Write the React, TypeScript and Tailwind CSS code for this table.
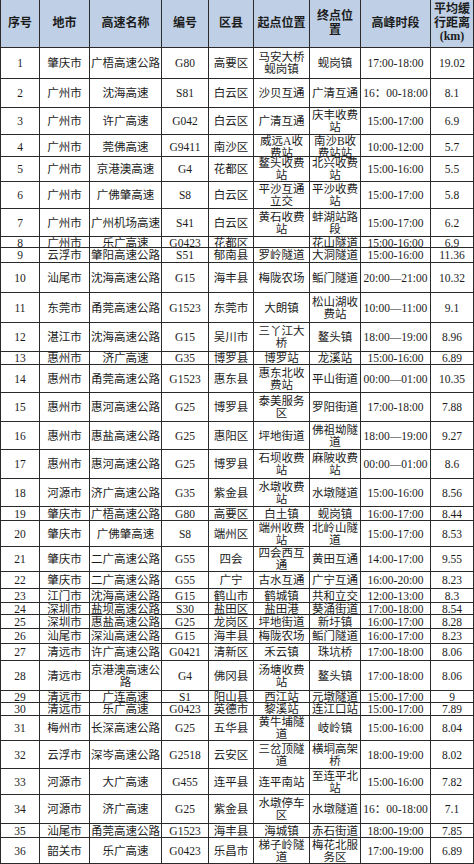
const GRID = 'grid grid-cols-[40px_50px_72px_47px_45px_56px_51px_70px_43px]'

type Row = [string, string, string, string, string, string, string, string, string, string]

// no, city, road, code, county, start, end, peak, km, row height
const rows: Row[] = [
  ['1', '肇庆市', '广梧高速公路', 'G80', '高要区', '马安大桥\n蚬岗镇', '蚬岗镇', '17:00-18:00', '19.02', 'h-[31px]'],
  ['2', '广州市', '沈海高速', 'S81', '白云区', '沙贝互通', '广清互通', '16：00-18:00', '8.1', 'h-[29px]'],
  ['3', '广州市', '许广高速', 'G042', '白云区', '广清互通', '庆丰收费\n站', '15:00-17:00', '6.9', 'h-[27px]'],
  ['4', '广州市', '莞佛高速', 'G9411', '南沙区', '威远A收\n费站', '南沙B收\n费站站', '10:00-12:00', '5.7', 'h-[22px]'],
  ['5', '广州市', '京港澳高速', 'G4', '花都区', '鳌头收费\n站', '北兴收费\n站', '15:00-16:00', '5.5', 'h-[25px]'],
  ['6', '广州市', '广佛肇高速', 'S8', '白云区', '平沙互通\n立交', '平沙收费\n站', '15:00-17:00', '5.8', 'h-[27px]'],
  ['7', '广州市', '广州机场高速', 'S41', '白云区', '黄石收费\n站', '蚌湖站路\n段', '15:00-17:00', '6.2', 'h-[28px]'],
  ['8', '广州市', '乐广高速', 'G0423', '花都区', '', '花山隧道', '15:00-16:00', '6.9', 'h-[11px]'],
  ['9', '云浮市', '肇阳高速公路', 'S51', '郁南县', '罗岭隧道', '大洞隧道', '15:00-16:00', '11.36', 'h-[15px]'],
  ['10', '汕尾市', '沈海高速公路', 'G15', '海丰县', '梅陇农场', '鲘门隧道', '20:00—21:00', '10.32', 'h-[30px]'],
  ['11', '东莞市', '甬莞高速公路', 'G1523', '东莞市', '大朗镇', '松山湖收\n费站', '10:00—11:00', '9.1', 'h-[30px]'],
  ['12', '湛江市', '沈海高速公路', 'G15', '吴川市', '三丫江大\n桥', '鳌头镇', '18:00—19:00', '8.96', 'h-[29px]'],
  ['13', '惠州市', '济广高速', 'G35', '博罗县', '博罗站', '龙溪站', '15:00-16:00', '6.89', 'h-[13px]'],
  ['14', '惠州市', '甬莞高速公路', 'G1523', '惠东县', '惠东北收\n费站', '平山街道', '00:00—01:00', '10.35', 'h-[28px]'],
  ['15', '惠州市', '惠河高速公路', 'G25', '博罗县', '泰美服务\n区', '罗阳街道', '17:00-18:00', '7.88', 'h-[29px]'],
  ['16', '惠州市', '惠盐高速公路', 'G25', '惠阳区', '坪地街道', '佛祖坳隧\n道', '18:00—19:00', '9.27', 'h-[28px]'],
  ['17', '惠州市', '惠河高速公路', 'G25', '博罗县', '石坝收费\n站', '麻陂收费\n站', '00:00—01:00', '8.6', 'h-[29px]'],
  ['18', '河源市', '济广高速公路', 'G35', '紫金县', '水墩收费\n站', '水墩隧道', '15:00-16:00', '8.56', 'h-[28px]'],
  ['19', '肇庆市', '广梧高速公路', 'G80', '高要区', '白土镇', '蚬岗镇', '16:00-17:00', '8.44', 'h-[14px]'],
  ['20', '肇庆市', '广佛肇高速', 'S8', '端州区', '端州收费\n站', '北岭山隧\n道', '15:00-17:00', '8.53', 'h-[26px]'],
  ['21', '肇庆市', '二广高速公路', 'G55', '四会', '四会西互\n通', '黄田互通', '14:00-17:00', '9.55', 'h-[25px]'],
  ['22', '肇庆市', '二广高速公路', 'G55', '广宁', '古水互通', '广宁互通', '16:00-20:00', '8.23', 'h-[17px]'],
  ['23', '江门市', '沈海高速公路', 'G15', '鹤山市', '鹤城镇', '共和立交', '12:00-13:00', '8.3', 'h-[14px]'],
  ['24', '深圳市', '盐坝高速公路', 'S30', '盐田区', '盐田港', '葵涌街道', '17:00-18:00', '8.54', 'h-[12px]'],
  ['25', '深圳市', '惠盐高速公路', 'G25', '龙岗区', '坪地街道', '新圩镇', '16:00-17:00', '8.28', 'h-[14px]'],
  ['26', '汕尾市', '深汕高速公路', 'G15', '海丰县', '梅陇农场', '鲘门隧道', '16:00-17:00', '8.23', 'h-[15px]'],
  ['27', '清远市', '许广高速公路', 'G0421', '清新区', '禾云镇', '珠坑桥', '17:00-18:00', '8.06', 'h-[17px]'],
  ['28', '清远市', '京港澳高速公\n路', 'G4', '佛冈县', '汤塘收费\n站', '鳌头镇', '17:00-18:00', '8.06', 'h-[30px]'],
  ['29', '清远市', '广连高速', 'S1', '阳山县', '西江站', '元墩隧道', '15:00-17:00', '9', 'h-[12px]'],
  ['30', '清远市', '乐广高速', 'G0423', '英德市', '黎溪站', '连江口站', '15:00-17:00', '7.89', 'h-[13px]'],
  ['31', '梅州市', '长深高速公路', 'G25', '五华县', '黄牛埔隧\n道', '岐岭镇', '15:00-16:00', '8.04', 'h-[25px]'],
  ['32', '云浮市', '深岑高速公路', 'G2518', '云安区', '三岔顶隧\n道', '横垌高架\n桥', '18:00-19:00', '8.02', 'h-[28px]'],
  ['33', '河源市', '大广高速', 'G455', '连平县', '连平南站', '至连平北\n站', '15:00-16:00', '7.82', 'h-[26px]'],
  ['34', '河源市', '济广高速', 'G25', '紫金县', '水墩停车\n区', '水墩隧道', '16：00-18:00', '7.1', 'h-[29px]'],
  ['35', '汕尾市', '甬莞高速公路', 'G1523', '海丰县', '海城镇', '赤石街道', '18:00-19:00', '7.85', 'h-[14px]'],
  ['36', '韶关市', '乐广高速', 'G0423', '乐昌市', '梯子岭隧\n道', '梅花北服\n务区', '17:00-19:00', '6.89', 'h-[26px]'],
]

const headers = ['序号', '地市', '高速名称', '编号', '区县', '起点位置', '终点位\n置', '高峰时段', '平均缓\n行距离\n(km)']

const cell = 'flex items-center justify-center text-center whitespace-pre-line border-r border-[#2a2a2a]'

export default function App() {
  return (
    <div className="w-[474px] h-[864px] overflow-hidden bg-white text-[#1c1c1c] font-['Liberation_Serif','Noto_Sans_CJK_SC',serif]">
      <div className={`${GRID} h-[48px] bg-[#bfd0e6] border-b border-[#2a2a2a] text-[12px] leading-[13.5px] font-bold`}>
        {headers.map((h, i) => (
          <div key={i} className={`${cell} ${i === 0 ? 'border-l' : ''}`}>{h}</div>
        ))}
      </div>
      {rows.map((r) => (
        <div key={r[0]} className={`${GRID} ${r[9]} border-b border-[#2a2a2a] text-[11.5px] leading-[12px]`}>
          {r.slice(0, 9).map((c, i) => (
            <div key={i} className={`${cell} ${i === 0 ? 'border-l' : ''}`}>{c}</div>
          ))}
        </div>
      ))}
    </div>
  )
}
